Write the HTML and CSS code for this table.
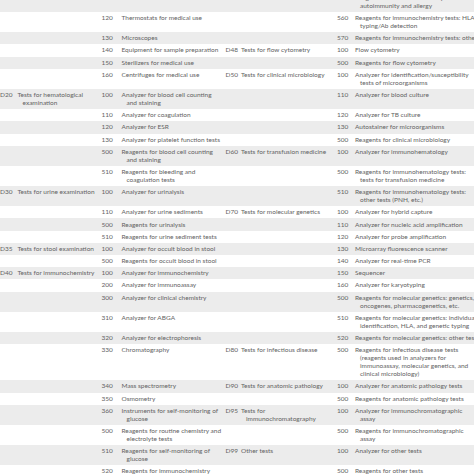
FILE: index.html
```html
<!DOCTYPE html>
<html>
<head>
<meta charset="utf-8">
<link rel="stylesheet" href="styles.css">
</head>
<body>
<div class="page">
<table class="t">
<colgroup>
<col class="c-code"><col class="c-cat"><col class="c-num"><col class="c-desc">
<col class="c-code2"><col class="c-cat2"><col class="c-num2"><col class="c-desc2">
</colgroup>
<tbody>
<tr><td class="code"></td><td class="cat"></td><td class="num">110</td><td class="desc">Incubators for medical use</td><td class="code"></td><td class="cat"></td><td class="num">550</td><td class="desc">Reagents for immunochemistry tests:<br>autoimmunity and allergy</td></tr>
<tr><td class="code"></td><td class="cat"></td><td class="num">120</td><td class="desc">Thermostats for medical use</td><td class="code"></td><td class="cat"></td><td class="num">560</td><td class="desc">Reagents for immunochemistry tests: HLA<br>typing/Ab detection</td></tr>
<tr><td class="code"></td><td class="cat"></td><td class="num">130</td><td class="desc">Microscopes</td><td class="code"></td><td class="cat"></td><td class="num">570</td><td class="desc">Reagents for immunochemistry tests: other</td></tr>
<tr><td class="code"></td><td class="cat"></td><td class="num">140</td><td class="desc">Equipment for sample preparation</td><td class="code">D48</td><td class="cat">Tests for flow cytometry</td><td class="num">100</td><td class="desc">Flow cytometry</td></tr>
<tr><td class="code"></td><td class="cat"></td><td class="num">150</td><td class="desc">Sterilizers for medical use</td><td class="code"></td><td class="cat"></td><td class="num">500</td><td class="desc">Reagents for flow cytometry</td></tr>
<tr><td class="code"></td><td class="cat"></td><td class="num">160</td><td class="desc">Centrifuges for medical use</td><td class="code">D50</td><td class="cat">Tests for clinical microbiology</td><td class="num">100</td><td class="desc">Analyzer for identification/susceptibility<br>tests of microorganisms</td></tr>
<tr><td class="code">D20</td><td class="cat">Tests for hematological<br>examination</td><td class="num">100</td><td class="desc">Analyzer for blood cell counting<br>and staining</td><td class="code"></td><td class="cat"></td><td class="num">110</td><td class="desc">Analyzer for blood culture</td></tr>
<tr><td class="code"></td><td class="cat"></td><td class="num">110</td><td class="desc">Analyzer for coagulation</td><td class="code"></td><td class="cat"></td><td class="num">120</td><td class="desc">Analyzer for TB culture</td></tr>
<tr><td class="code"></td><td class="cat"></td><td class="num">120</td><td class="desc">Analyzer for ESR</td><td class="code"></td><td class="cat"></td><td class="num">130</td><td class="desc">Autostainer for microorganisms</td></tr>
<tr><td class="code"></td><td class="cat"></td><td class="num">130</td><td class="desc">Analyzer for platelet function tests</td><td class="code"></td><td class="cat"></td><td class="num">500</td><td class="desc">Reagents for clinical microbiology</td></tr>
<tr><td class="code"></td><td class="cat"></td><td class="num">500</td><td class="desc">Reagents for blood cell counting<br>and staining</td><td class="code">D60</td><td class="cat">Tests for transfusion medicine</td><td class="num">100</td><td class="desc">Analyzer for immunohematology</td></tr>
<tr><td class="code"></td><td class="cat"></td><td class="num">510</td><td class="desc">Reagents for bleeding and<br>coagulation tests</td><td class="code"></td><td class="cat"></td><td class="num">500</td><td class="desc">Reagents for immunohematology tests:<br>tests for transfusion medicine</td></tr>
<tr><td class="code">D30</td><td class="cat">Tests for urine examination</td><td class="num">100</td><td class="desc">Analyzer for urinalysis</td><td class="code"></td><td class="cat"></td><td class="num">510</td><td class="desc">Reagents for immunohematology tests:<br>other tests (PNH, etc.)</td></tr>
<tr><td class="code"></td><td class="cat"></td><td class="num">110</td><td class="desc">Analyzer for urine sediments</td><td class="code">D70</td><td class="cat">Tests for molecular genetics</td><td class="num">100</td><td class="desc">Analyzer for hybrid capture</td></tr>
<tr><td class="code"></td><td class="cat"></td><td class="num">500</td><td class="desc">Reagents for urinalysis</td><td class="code"></td><td class="cat"></td><td class="num">110</td><td class="desc">Analyzer for nucleic acid amplification</td></tr>
<tr><td class="code"></td><td class="cat"></td><td class="num">510</td><td class="desc">Reagents for urine sediment tests</td><td class="code"></td><td class="cat"></td><td class="num">120</td><td class="desc">Analyzer for probe amplification</td></tr>
<tr><td class="code">D35</td><td class="cat">Tests for stool examination</td><td class="num">100</td><td class="desc">Analyzer for occult blood in stool</td><td class="code"></td><td class="cat"></td><td class="num">130</td><td class="desc">Microarray fluorescence scanner</td></tr>
<tr><td class="code"></td><td class="cat"></td><td class="num">500</td><td class="desc">Reagents for occult blood in stool</td><td class="code"></td><td class="cat"></td><td class="num">140</td><td class="desc">Analyzer for real-time PCR</td></tr>
<tr><td class="code">D40</td><td class="cat">Tests for immunochemistry</td><td class="num">100</td><td class="desc">Analyzer for immunochemistry</td><td class="code"></td><td class="cat"></td><td class="num">150</td><td class="desc">Sequencer</td></tr>
<tr><td class="code"></td><td class="cat"></td><td class="num">200</td><td class="desc">Analyzer for immunoassay</td><td class="code"></td><td class="cat"></td><td class="num">160</td><td class="desc">Analyzer for karyotyping</td></tr>
<tr><td class="code"></td><td class="cat"></td><td class="num">300</td><td class="desc">Analyzer for clinical chemistry</td><td class="code"></td><td class="cat"></td><td class="num">500</td><td class="desc">Reagents for molecular genetics: genetics,<br>oncogenes, pharmacogenetics, etc.</td></tr>
<tr><td class="code"></td><td class="cat"></td><td class="num">310</td><td class="desc">Analyzer for ABGA</td><td class="code"></td><td class="cat"></td><td class="num">510</td><td class="desc">Reagents for molecular genetics: individual<br>identification, HLA, and genetic typing</td></tr>
<tr><td class="code"></td><td class="cat"></td><td class="num">320</td><td class="desc">Analyzer for electrophoresis</td><td class="code"></td><td class="cat"></td><td class="num">520</td><td class="desc">Reagents for molecular genetics: other tests.</td></tr>
<tr><td class="code"></td><td class="cat"></td><td class="num">330</td><td class="desc">Chromatography</td><td class="code">D80</td><td class="cat">Tests for infectious disease</td><td class="num">500</td><td class="desc">Reagents for infectious disease tests<br>(reagents used in analyzers for<br>immunoassay, molecular genetics, and<br>clinical microbiology)</td></tr>
<tr><td class="code"></td><td class="cat"></td><td class="num">340</td><td class="desc">Mass spectrometry</td><td class="code">D90</td><td class="cat">Tests for anatomic pathology</td><td class="num">100</td><td class="desc">Analyzer for anatomic pathology tests</td></tr>
<tr><td class="code"></td><td class="cat"></td><td class="num">350</td><td class="desc">Osmometry</td><td class="code"></td><td class="cat"></td><td class="num">500</td><td class="desc">Reagents for anatomic pathology tests</td></tr>
<tr><td class="code"></td><td class="cat"></td><td class="num">360</td><td class="desc">Instruments for self-monitoring of<br>glucose</td><td class="code">D95</td><td class="cat">Tests for<br>immunochromatography</td><td class="num">100</td><td class="desc">Analyzer for immunochromatographic<br>assay</td></tr>
<tr><td class="code"></td><td class="cat"></td><td class="num">500</td><td class="desc">Reagents for routine chemistry and<br>electrolyte tests</td><td class="code"></td><td class="cat"></td><td class="num">500</td><td class="desc">Reagents for immunochromatographic<br>assay</td></tr>
<tr><td class="code"></td><td class="cat"></td><td class="num">510</td><td class="desc">Reagents for self-monitoring of<br>glucose</td><td class="code">D99</td><td class="cat">Other tests</td><td class="num">100</td><td class="desc">Analyzer for other tests</td></tr>
<tr><td class="code"></td><td class="cat"></td><td class="num">520</td><td class="desc">Reagents for immunochemistry</td><td class="code"></td><td class="cat"></td><td class="num">500</td><td class="desc">Reagents for other tests</td></tr>
</tbody>
</table>
</div>
</body>
</html>
```

FILE: styles.css
```css
html, body {
  margin: 0;
  padding: 0;
  background: #ffffff;
}
.page {
  width: 474px;
  height: 474px;
  overflow: hidden;
}
.t {
  border-collapse: collapse;
  border-spacing: 0;
  table-layout: fixed;
  width: 480px;
  margin-top: -8.2px;
  font-family: Lato, "Open Sans", sans-serif;
  font-size: 6.5px;
  line-height: 8px;
  color: #636363;
}
.t tr:nth-child(odd) {
  background: #ececec;
}
.t td {
  padding: 2.1px 0;
  vertical-align: top;
  white-space: nowrap;
  overflow: visible;
}
.c-code { width: 17.5px; }
.c-cat { width: 84px; }
.c-num { width: 20px; }
.c-desc { width: 104px; }
.c-code2 { width: 15.5px; }
.c-cat2 { width: 96px; }
.c-num2 { width: 18px; }
.c-desc2 { width: 125px; }
.cat, .desc {
  padding-left: 5px !important;
  text-indent: -5px;
}
```
